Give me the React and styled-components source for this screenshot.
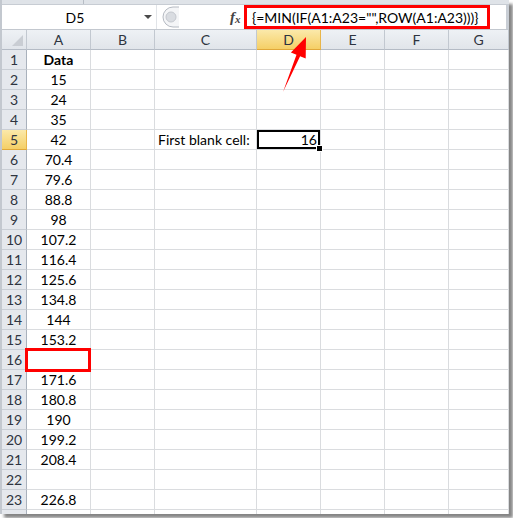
import React from "react";
import styled, { createGlobalStyle, css } from "styled-components";

const columns = ["A", "B", "C", "D", "E", "F", "G"];
const widths = [64, 64, 102, 64, 64, 64, 60];

const values = [
  "Data", "15", "24", "35", "42", "70.4", "79.6", "88.8", "98", "107.2",
  "116.4", "125.6", "134.8", "144", "153.2", "", "171.6", "180.8", "190",
  "199.2", "208.4", "", "226.8", "",
];

export default function App() {
  return (
    <Frame>
      <GlobalStyle />
      <Window>
        <TopStrip />
        <FormulaBar>
          <NameBox>
            <NameText>D5</NameText>
            <DropArrow />
          </NameBox>
          <Splitter>
            <svg width="18" height="22" viewBox="0 0 18 22">
              <path d="M17 1 H11 A10 10 0 0 0 11 21 H17" fill="#f4f5f7" stroke="#b5bac2" />
              <circle cx="9" cy="11" r="5" fill="#d9dce1" stroke="#c4c8ce" />
            </svg>
          </Splitter>
          <FxLabel>
            f<sub>x</sub>
          </FxLabel>
          <FormulaBox>{'{=MIN(IF(A1:A23="",ROW(A1:A23)))}'}</FormulaBox>
        </FormulaBar>
        <Separator />
        <Sheet>
          <Corner />
          {columns.map((c) => (
            <ColHeader key={c} $active={c === "D"}>
              {c}
            </ColHeader>
          ))}
          {values.map((v, i) => {
            const row = i + 1;
            // the last row is only a sliver at the window's edge
            const label = row < values.length ? row : "";
            return (
              <React.Fragment key={row}>
                <RowHeader $active={row === 5}>{label}</RowHeader>
                <Cell $align="center" $bold={row === 1}>
                  {v}
                </Cell>
                <Cell />
                <Cell $align="left">{row === 5 ? "First blank cell:" : ""}</Cell>
                <Cell $align="right" $selected={row === 5}>
                  {row === 5 ? "16" : ""}
                </Cell>
                <Cell />
                <Cell />
                <Cell />
              </React.Fragment>
            );
          })}
        </Sheet>
        <BlankMark />
        <Arrow width="40" height="70" viewBox="270 30 40 70">
          <polygon
            points="283,92 300.1,56.3 305.7,58.6 306,37 290.9,52.4 296.5,54.7"
            fill="#ff0000"
          />
        </Arrow>
      </Window>
    </Frame>
  );
}

const GlobalStyle = createGlobalStyle`
  body {
    margin: 0;
    background: #ffffff;
    font-family: Lato, "Open Sans", sans-serif;
  }
`;

const Frame = styled.div`
  width: 513px;
  height: 518px;
  overflow: hidden;
`;

const Window = styled.div`
  position: relative;
  width: 509px;
  height: 514px;
  box-sizing: border-box;
  border-left: 2px solid #c3c8cf;
  background: #ffffff;
  overflow: hidden;
  box-shadow: 4px 4px 3px rgba(0, 0, 0, 0.48);
  display: flex;
  flex-direction: column;
`;

const TopStrip = styled.div`
  height: 4px;
  flex: none;
  background: linear-gradient(90deg, #dfe3e8 0 81px, #b7bdc5 81px 82px, #dfe3e8 82px);
  border-bottom: 1px solid #c7ccd3;
`;

const FormulaBar = styled.div`
  height: 24px;
  flex: none;
  display: flex;
  align-items: center;
  background: #ffffff;
  border-right: 3px solid #c9ced5;
`;

const NameBox = styled.div`
  width: 155px;
  height: 100%;
  display: flex;
  align-items: center;
  border-right: 1px solid #e1e4e8;
  box-sizing: border-box;
`;

const NameText = styled.span`
  flex: 1;
  text-align: center;
  font-size: 14px;
  color: #000;
  padding-left: 4px;
`;

const DropArrow = styled.span`
  width: 0;
  height: 0;
  margin-right: 4px;
  border-left: 4px solid transparent;
  border-right: 4px solid transparent;
  border-top: 4px solid #4a4a4a;
`;

const Splitter = styled.div`
  margin-left: 5px;
  display: flex;
  align-items: center;
`;

const FxLabel = styled.span`
  margin-left: 50px;
  width: 14px;
  font-family: "Liberation Serif", serif;
  font-style: italic;
  font-weight: bold;
  font-size: 15px;
  color: #444;
  sub {
    font-size: 11px;
    vertical-align: -1px;
  }
`;

const FormulaBox = styled.div`
  width: 246px;
  height: 24px;
  box-sizing: border-box;
  border: 3px solid #ff0000;
  display: flex;
  align-items: center;
  padding-left: 5px;
  font-size: 14px;
  color: #000;
  white-space: nowrap;
`;

const Separator = styled.div`
  height: 1px;
  flex: none;
  background: #c3c8cf;
`;

const Sheet = styled.div`
  display: grid;
  grid-template-columns: 25px ${widths.map((w) => `${w}px`).join(" ")};
  grid-auto-rows: 20px;
`;

const headerBase = css`
  box-sizing: border-box;
  display: flex;
  align-items: center;
  justify-content: center;
  font-size: 14px;
  color: #2e3440;
  background: linear-gradient(#eef1f5, #e1e5ea);
  border-right: 1px solid #c2c8d0;
  border-bottom: 1px solid #b4bbc5;
`;

const activeHeader = css`
  background: linear-gradient(#fbe9aa, #f5cf66);
  border-right-color: #e8b54a;
  border-bottom-color: #e0a83a;
`;

const Corner = styled.div`
  ${headerBase};
  position: relative;
  &::after {
    content: "";
    position: absolute;
    right: 3px;
    bottom: 3px;
    border-left: 11px solid transparent;
    border-bottom: 11px solid #c9cdd3;
  }
`;

const ColHeader = styled.div`
  ${headerBase};
  ${(p) => p.$active && activeHeader};
`;

const RowHeader = styled.div`
  ${headerBase};
  background: #e5e8ed;
  border-bottom-color: #c9ced5;
  border-right-color: #a9b1bc;
  ${(p) => p.$active && activeHeader};
`;

const Cell = styled.div`
  position: relative;
  box-sizing: border-box;
  border-right: 1px solid #dadcdf;
  border-bottom: 1px solid #dadcdf;
  display: flex;
  align-items: center;
  padding: 0 3px;
  font-size: 14px;
  color: #000;
  white-space: nowrap;
  justify-content: ${(p) =>
    p.$align === "center" ? "center" : p.$align === "right" ? "flex-end" : "flex-start"};
  font-weight: ${(p) => (p.$bold ? 700 : 400)};
  ${(p) =>
    p.$selected &&
    css`
      box-shadow: inset 0 0 0 2px #000;
      &::after {
        content: "";
        position: absolute;
        right: -3px;
        bottom: -3px;
        width: 5px;
        height: 5px;
        background: #000;
        border: 1px solid #fff;
        z-index: 2;
      }
    `}
`;

const BlankMark = styled.div`
  position: absolute;
  left: 23px;
  top: 348px;
  width: 66px;
  height: 24px;
  box-sizing: border-box;
  border: 3px solid #ff0000;
`;

const Arrow = styled.svg`
  position: absolute;
  left: 268px;
  top: 30px;
`;
